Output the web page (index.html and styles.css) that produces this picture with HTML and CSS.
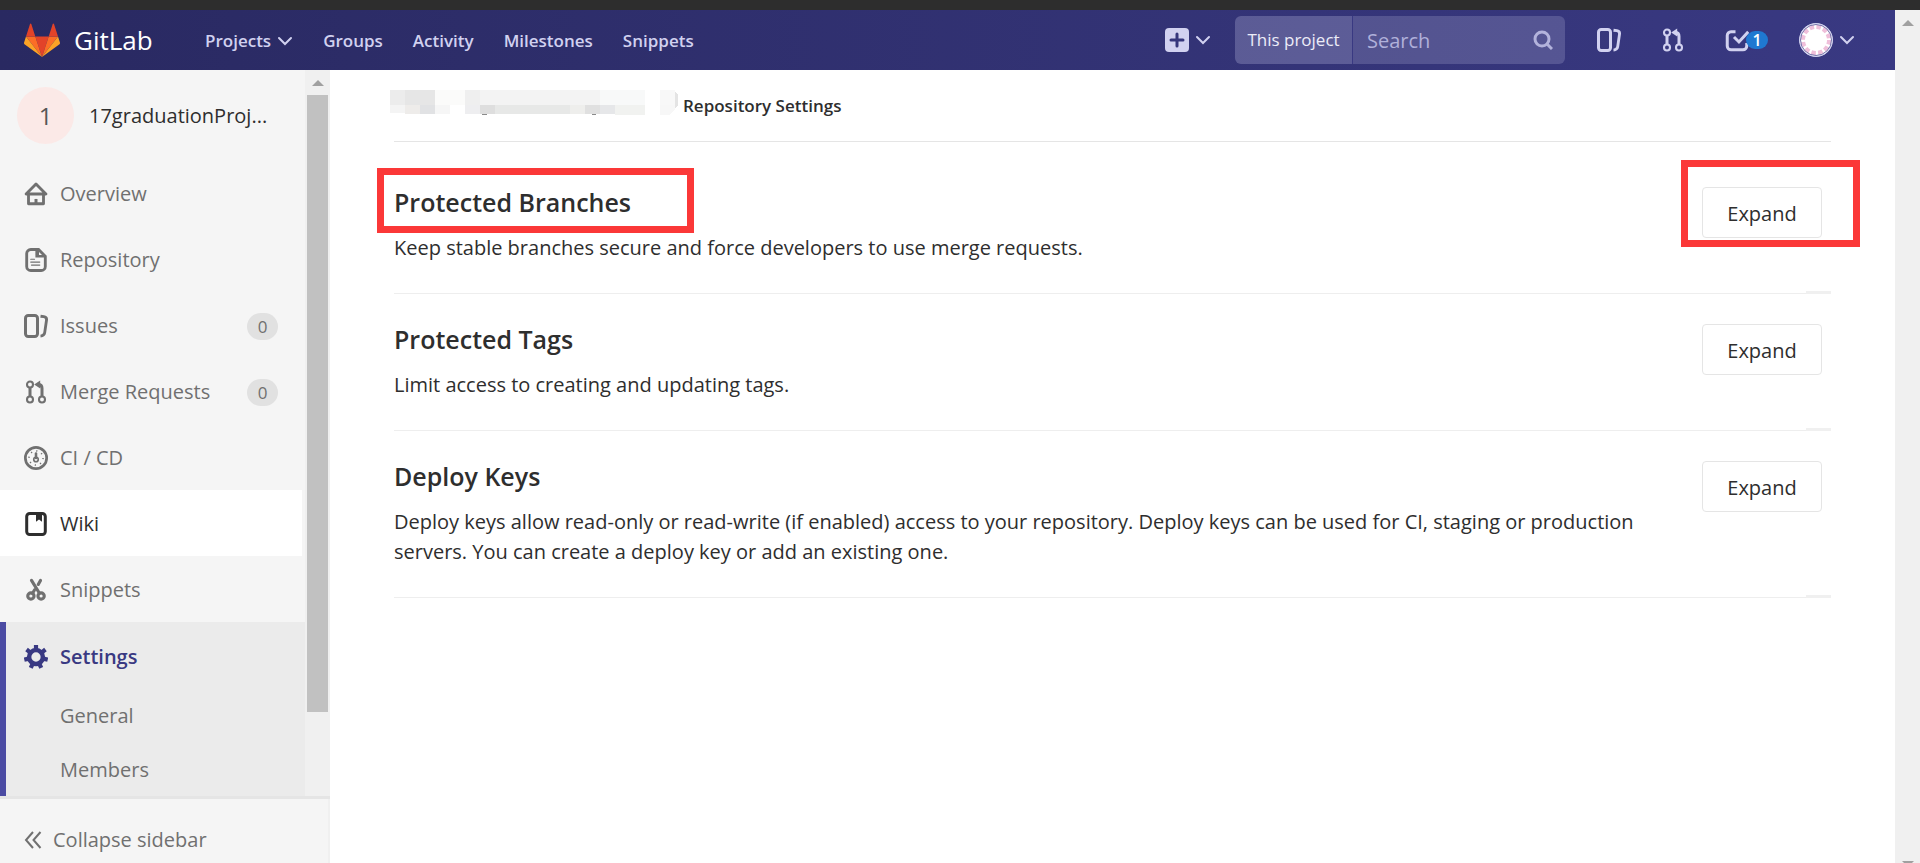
FILE: index.html
```html
<!DOCTYPE html>
<html lang="en">
<head>
    <meta charset="UTF-8">
    <meta name="viewport" content="width=device-width, initial-scale=1.0">
    <title>Repository Settings · GitLab</title>
    <link rel="stylesheet" href="styles.css">
</head>
<body>
    <!-- shared icons -->
    <svg class="sprite" xmlns="http://www.w3.org/2000/svg">
        <symbol id="chevron" viewBox="0 0 16 16"><path d="M2 5l6 6 6-6" fill="none" stroke="currentColor" stroke-width="2" stroke-linecap="round"/></symbol>
        <symbol id="issues" viewBox="0 0 16 16"><rect x="1" y="1" width="8" height="14" rx="1.800" fill="none" stroke="currentColor" stroke-width="2"/><path d="M11 1.500l2.200.3c1.200.2 2 1.200 1.800 2.400l-1.200 8.200c-.2 1.300-1.100 2.200-2.800 2.300" fill="none" stroke="currentColor" stroke-width="1.900"/></symbol>
        <symbol id="merge" viewBox="0 0 16 16"><g fill="none" stroke="currentColor"><g stroke-width="1.400"><circle cx="4" cy="3" r="2"/><circle cx="4" cy="13" r="2"/><circle cx="12" cy="13" r="2"/></g><path d="M4 5v6M12 11V5.500C12 4 11.300 3 9.500 3" stroke-width="2"/></g><path d="M6.800 3l4-2.600v5.200z" fill="currentColor"/></symbol>
    </svg>

    <div class="window-edge"></div>

    <div class="window">
        <div class="app">
            <header class="navbar">
                <a href="#" class="brand">
                    <svg width="36" height="34" viewBox="0 0 36 34">
                        <path d="M18 34L11.300 13.500h13.400z" fill="#e24329"/>
                        <path d="M18 34L11.300 13.500H2z" fill="#fc6d26"/>
                        <path d="M2 13.500L0 19.700c-.2.600 0 1.200.5 1.500L18 34z" fill="#fca326"/>
                        <path d="M2 13.500h9.300L7.300 1c-.2-.7-1.100-.7-1.300 0z" fill="#e24329"/>
                        <path d="M18 34l6.700-20.500H34z" fill="#fc6d26"/>
                        <path d="M34 13.500l2 6.200c.2.600 0 1.200-.5 1.500L18 34z" fill="#fca326"/>
                        <path d="M34 13.500h-9.300l4-12.500c.2-.7 1.100-.7 1.300 0z" fill="#e24329"/>
                    </svg>
                    <span>GitLab</span>
                </a>
                <nav class="nav-links">
                    <a href="#">Projects <svg class="chevron"><use href="#chevron"/></svg></a>
                    <a href="#">Groups</a>
                    <a href="#">Activity</a>
                    <a href="#">Milestones</a>
                    <a href="#">Snippets</a>
                </nav>
                <div class="nav-tools">
                    <button type="button" class="new-menu" aria-label="New">
                        <svg width="24" height="24" viewBox="0 0 24 24"><rect width="24" height="24" rx="4" fill="currentColor"/><path d="M12 6v12M6 12h12" stroke="#36367c" stroke-width="3" stroke-linecap="round"/></svg>
                        <svg class="chevron"><use href="#chevron"/></svg>
                    </button>
                    <form class="search">
                        <label for="search">This project</label>
                        <input type="text" id="search" name="search" placeholder="Search">
                        <button type="submit" aria-label="Search">
                            <svg width="20" height="20" viewBox="0 0 20 20" fill="none" stroke="currentColor" stroke-width="3"><circle cx="9" cy="9" r="7"/><path d="M14 14l5 5"/></svg>
                        </button>
                    </form>
                    <a href="#" class="tool" aria-label="Issues"><svg class="icon"><use href="#issues"/></svg></a>
                    <a href="#" class="tool" aria-label="Merge requests"><svg class="icon"><use href="#merge"/></svg></a>
                    <a href="#" class="tool todos" aria-label="Todos">
                        <svg class="icon" viewBox="0 0 16 16" fill="none" stroke="currentColor" stroke-width="2"><path d="M7 2.500H4A2.500 2.500 0 0 0 1.500 5v7A2.500 2.500 0 0 0 4 14.500h8A2.500 2.500 0 0 0 14.500 12v-2"/><path d="M6 6l3.300 3.300L15.500 2.500"/></svg>
                        <span class="todo-count">1</span>
                    </a>
                    <button type="button" class="user-menu" aria-label="Account">
                        <svg width="34" height="34" viewBox="0 0 34 34">
                            <circle cx="17" cy="17" r="16.500" fill="#fff" stroke="#d1d1f0"/>
                            <circle cx="17" cy="17" r="13" fill="none" stroke="#efbfda" stroke-width="4" stroke-dasharray="4.500 2.307"/>
                            <circle cx="17" cy="17" r="15.500" fill="none" stroke="#4c4c92" stroke-width=".8"/>
                        </svg>
                        <svg class="chevron"><use href="#chevron"/></svg>
                    </button>
                </div>
            </header>

            <div class="page">
                <aside class="sidebar">
                    <div class="sidebar-scroll">
                        <div class="sidebar-content">
                            <a href="#" class="project">
                                <span class="project-avatar">1</span>
                                <span class="project-name">17graduationProj...</span>
                            </a>
                            <ul class="sidebar-menu">
                                <li><a href="#">
                                    <svg class="icon" viewBox="0 0 16 16" fill="none" stroke="currentColor" stroke-width="1.900" stroke-linejoin="round"><path d="M1.400 8L8 1.300 14.600 8zM3 8v6.500h10V8"/><path d="M8 11.300V14" stroke-width="2"/></svg>
                                    Overview</a></li>
                                <li><a href="#">
                                    <svg class="icon" viewBox="0 0 16 16" fill="none" stroke="currentColor"><path d="M9.500 1H4.500A2.700 2.700 0 0 0 1.800 3.700v8.600A2.700 2.700 0 0 0 4.500 15h7a2.700 2.700 0 0 0 2.700-2.700V5.500L9.700 1z" stroke-width="1.900"/><path d="M7.600.8V6.400H14V4.500L10.500 1z" fill="currentColor" stroke="none"/><path d="M10 2.600v2h2z" fill="#f5f5f5" stroke="none"/><path d="M4.500 7.500H7M4.500 9.400h6M5 11.400h5.500" stroke-width=".8" stroke-linecap="round"/></svg>
                                    Repository</a></li>
                                <li><a href="#"><svg class="icon"><use href="#issues"/></svg> Issues <span class="badge">0</span></a></li>
                                <li><a href="#"><svg class="icon"><use href="#merge"/></svg> Merge Requests <span class="badge">0</span></a></li>
                                <li><a href="#">
                                    <svg class="icon" viewBox="0 0 16 16" fill="none" stroke="currentColor"><circle cx="8" cy="8" r="7.100" stroke-width="1.800"/><circle cx="8" cy="8" r="4.700" stroke-width="1" stroke-dasharray=".8 2.891"/><circle cx="8" cy="9" r="1.500" stroke-width="1.100"/><path d="M8 5v3" stroke-width="1.700" stroke-linecap="round"/></svg>
                                    CI / CD</a></li>
                                <li class="current"><a href="#">
                                    <svg class="icon" viewBox="0 0 16 16" fill="none" stroke="currentColor"><rect x="1.800" y="1" width="12.400" height="14" rx="2" stroke-width="2"/><path d="M8 1.500h4v5L10 5 8 6.500z" fill="currentColor" stroke="none"/></svg>
                                    Wiki</a></li>
                                <li><a href="#">
                                    <svg class="icon" viewBox="0 0 16 16" fill="none" stroke="currentColor"><circle cx="4.600" cy="12" r="2.100" stroke-width="2.100"/><circle cx="11.400" cy="12" r="2.100" stroke-width="2.100"/><path d="M5 1.600L10.200 10M11 1.600L9.500 4.300M7 8l-1.300 2.200" stroke-width="2.100" stroke-linecap="round"/></svg>
                                    Snippets</a></li>
                            </ul>
                            <div class="active-group">
                                <a href="#" class="active-title">
                                    <svg class="icon" viewBox="0 0 16 16" fill="none" stroke="currentColor"><circle cx="8" cy="8" r="4.600" stroke-width="3"/><path d="M8 0v3M1.700 3l2.400 1.900M.2 9.800l3-.7M4.500 15.200l1.300-2.700M11.500 15.200l-1.300-2.700M15.800 9.800l-3-.7M14.300 3l-2.400 1.900" stroke-width="2.800"/></svg>
                                    Settings</a>
                                <a href="#">General</a>
                                <a href="#">Members</a>
                            </div>
                        </div>
                        <div class="scrollbar">
                            <span class="arrow-up"></span>
                            <span class="thumb"></span>
                        </div>
                    </div>
                    <button type="button" class="collapse">
                        <svg width="18" height="18" viewBox="0 0 18 18" fill="none" stroke="currentColor" stroke-width="2"><path d="M9 1L2 9l7 8M16.500 1l-7 8 7 8"/></svg>
                        Collapse sidebar
                    </button>
                </aside>

                <main class="content">
                    <div class="breadcrumbs">
                        <svg class="redacted" width="290" height="26" viewBox="0 0 290 26" shape-rendering="crispEdges">
                            <path d="M0 0h15v15H0z" fill="#ececec"/>
                            <path d="M15 0h30v15H15z" fill="#e6e6e6"/>
                            <path d="M45 0h30v15H45z" fill="#fbfbfa"/>
                            <path d="M75 0h15v15H75z" fill="#efefef"/>
                            <path d="M90 0h120v15H90z" fill="#f3f3f3"/>
                            <path d="M210 0h45v15h-45z" fill="#f8f9f9"/>
                            <path d="M270 0h15v15h-15z" fill="#f8f8f8"/>
                            <path d="M0 15h15v8H0z" fill="#f4f4f4"/>
                            <path d="M15 15h15v9H15z" fill="#eeecea"/>
                            <path d="M30 15h15v9H30z" fill="#e1e2e4"/>
                            <path d="M45 15h15v9H45z" fill="#f6f6f6"/>
                            <path d="M75 15h15v9H75z" fill="#eeeef0"/>
                            <path d="M90 15h15v9H90z" fill="#dedede"/>
                            <path d="M105 15h75v9h-75z" fill="#e7e8e7"/>
                            <path d="M180 15h15v9h-15z" fill="#eeeeec"/>
                            <path d="M195 15h15v9h-15z" fill="#e0e0e0"/>
                            <path d="M210 15h15v9h-15z" fill="#e6e7e9"/>
                            <path d="M225 15h30v10h-30z" fill="#f1f2f0"/>
                            <path d="M270 15h15v5l-6 5h-9z" fill="#f7f7f7"/>
                            <path d="M285 1l3 4v10l-3 4z" fill="#e4e4e4"/>
                            <path d="M92 24h5v1h-5zM202 24h4v1h-4z" fill="#8a8a8a"/>
                        </svg>
                        <strong>Repository Settings</strong>
                    </div>

                    <section class="settings">
                        <div class="settings-text">
                            <h4><span class="marked">Protected Branches</span></h4>
                            <p>Keep stable branches secure and force developers to use merge requests.</p>
                        </div>
                        <div class="settings-action marked-action"><button type="button" class="btn">Expand</button></div>
                    </section>
                    <section class="settings">
                        <div class="settings-text">
                            <h4>Protected Tags</h4>
                            <p>Limit access to creating and updating tags.</p>
                        </div>
                        <div class="settings-action"><button type="button" class="btn">Expand</button></div>
                    </section>
                    <section class="settings">
                        <div class="settings-text">
                            <h4>Deploy Keys</h4>
                            <p>Deploy keys allow read-only or read-write (if enabled) access to your repository. Deploy keys can be used for CI, staging or production servers. You can create a deploy key or add an existing one.</p>
                        </div>
                        <div class="settings-action"><button type="button" class="btn">Expand</button></div>
                    </section>
                </main>
            </div>
        </div>
        <div class="scrollbar">
            <span class="arrow-up"></span>
            <span class="arrow-down"></span>
        </div>
    </div>
</body>
</html>
```
FILE: styles.css
```css
*, *::before, *::after {
    box-sizing: border-box;
}
body {
    margin: 0;
    height: 100vh;
    display: flex;
    flex-direction: column;
    overflow: hidden;
    font-family: "Segoe UI", "Open Sans", "Noto Sans", sans-serif;
    font-size: 20px;
    line-height: 30px;
    color: #2e2e2e;
    background-color: #fff;
}
a {
    color: inherit;
    text-decoration: none;
}
button, input {
    font: inherit;
    color: inherit;
    background: none;
    border: 0;
    padding: 0;
}
.sprite {
    position: absolute;
    width: 0;
    height: 0;
}
.icon {
    width: 24px;
    height: 24px;
    flex: none;
}
.chevron {
    width: 16px;
    height: 16px;
    flex: none;
}

/* window frame */
.window-edge {
    height: 10px;
    flex: none;
    background-color: #2d2d2d;
}
.window {
    flex: 1;
    display: flex;
    min-height: 0;
}
.app {
    flex: 1;
    display: flex;
    flex-direction: column;
    min-width: 0;
}
.scrollbar {
    width: 25px;
    flex: none;
    display: flex;
    flex-direction: column;
    align-items: center;
    padding-top: 10px;
    background-color: #f0f0f0;
}
.arrow-up {
    border: 6px solid transparent;
    border-top: 0;
    border-bottom-color: #a0a0a0;
}
.arrow-down {
    margin: auto 0 -4px;
    border: 6px solid transparent;
    border-bottom: 0;
    border-top-color: #a0a0a0;
}
.thumb {
    width: 21px;
    height: 617px;
    margin-top: 9px;
    background-color: #c1c1c1;
}

/* navbar */
.navbar {
    height: 60px;
    flex: none;
    display: flex;
    align-items: center;
    padding: 0 40px 0 24px;
    color: #d1d1f0;
    background: linear-gradient(to right, #292961, #393982);
}
.brand {
    display: flex;
    align-items: center;
    gap: 14px;
    width: 181px;
    font-size: 26px;
    color: #fff;
}
.nav-links {
    display: flex;
    gap: 30px;
    padding-top: 2px;
    font-size: 17px;
    font-weight: 600;
}
.nav-links a {
    display: flex;
    align-items: center;
    gap: 6px;
}
.nav-tools {
    display: flex;
    align-items: center;
    margin-left: auto;
}
.new-menu, .user-menu {
    display: flex;
    align-items: center;
    gap: 6px;
}
.search {
    display: flex;
    align-items: center;
    width: 330px;
    height: 48px;
    margin: 0 12px 0 24px;
    border-radius: 6px;
    overflow: hidden;
    background-color: rgba(209, 209, 240, 0.2);
}
.search label {
    width: 118px;
    flex: none;
    text-align: center;
    font-size: 17px;
    line-height: 50px;
    color: #ececf8;
    border-right: 1px solid #393982;
    background-color: rgba(209, 209, 240, 0.08);
}
.search input {
    flex: 1;
    min-width: 0;
    padding: 2px 0 0 14px;
}
.search input::placeholder {
    color: #b0b0da;
    opacity: 1;
}
.search button {
    height: 20px;
    margin-right: 12px;
    color: #b3b3dc;
}
.search svg {
    display: block;
}
.tool {
    display: flex;
    padding: 0 20px;
}
.todos {
    position: relative;
    margin-right: 30px;
}
.todo-count {
    position: absolute;
    left: 41px;
    top: 3px;
    width: 22px;
    height: 18px;
    border-radius: 9px;
    text-align: center;
    font-size: 16px;
    font-weight: 600;
    line-height: 18px;
    color: #fff;
    background-color: #1f78d1;
}

/* sidebar */
.page {
    flex: 1;
    display: flex;
    min-height: 0;
}
.sidebar {
    width: 330px;
    flex: none;
    display: flex;
    flex-direction: column;
    color: #707070;
    background-color: #f5f5f5;
    box-shadow: inset -2px 0 #f0f0f0;
}
.sidebar-scroll {
    flex: 1;
    display: flex;
    min-height: 0;
    overflow: hidden;
    border-bottom: 3px solid #e5e5e5;
}
.sidebar-content {
    flex: 1;
    display: flex;
    flex-direction: column;
}
.project {
    display: flex;
    align-items: center;
    gap: 15px;
    height: 90px;
    flex: none;
    padding-left: 17px;
    font-weight: 500;
    color: #2e2e2e;
}
.project-avatar {
    width: 57px;
    height: 57px;
    border-radius: 50%;
    text-align: center;
    font-size: 24px;
    line-height: 57px;
    color: #555;
    background-color: #fbe9e7;
}
.project-name {
    padding-top: 2px;
}
.sidebar-menu {
    margin: 0;
    padding: 0;
    list-style: none;
}
.sidebar-menu a, .active-title {
    display: flex;
    align-items: center;
    gap: 12px;
    height: 66px;
    padding: 2px 24px 0;
}
.sidebar-menu .current {
    margin-right: 3px;
    color: #2e2e2e;
    background-color: #fff;
}
.badge {
    width: 31px;
    height: 27px;
    margin: 0 3px 0 auto;
    border-radius: 14px;
    text-align: center;
    font-size: 17px;
    line-height: 27px;
    background-color: #e1e1e1;
}
.active-group {
    flex: 1;
    border-left: 6px solid #4b4ba3;
    background-color: #ebebeb;
}
.active-group a {
    display: flex;
    align-items: center;
    height: 54px;
    padding-left: 54px;
}
.active-group .active-title {
    height: 67px;
    padding-left: 18px;
    font-weight: 600;
    color: #393982;
}
.collapse {
    display: flex;
    align-items: center;
    gap: 11px;
    height: 64px;
    padding: 18px 0 0 24px;
}

/* settings page */
.content {
    flex: 1;
    min-width: 0;
    padding: 0 64px;
}
.breadcrumbs {
    display: flex;
    align-items: center;
    height: 72px;
    margin-bottom: 15px;
    border-bottom: 1px solid #e5e5e5;
    font-size: 17px;
}
.breadcrumbs strong {
    font-weight: 600;
}
.redacted {
    flex: none;
    margin: 0 3px 6px -4px;
}
.settings {
    position: relative;
    display: flex;
    justify-content: space-between;
    padding: 30px 9px 30px 0;
    border-bottom: 1px solid #eee;
}
.settings::after {
    content: "";
    position: absolute;
    right: 0;
    bottom: -1px;
    width: 25px;
    height: 3px;
    background-color: #f0f0f0;
}
.settings-text {
    max-width: 1260px;
}
.settings h4 {
    margin: 0 0 16px;
    font-size: 25px;
    font-weight: 600;
    line-height: 30px;
}
.settings p {
    margin: 0;
}
.settings-action {
    position: relative;
    height: 46px;
}
.btn {
    width: 120px;
    height: 51px;
    padding-top: 3px;
    border: 1px solid #e5e5e5;
    border-radius: 4px;
    background-color: #fff;
}

/* red marker frames */
.marked {
    position: relative;
}
.marked::after, .marked-action::after {
    content: "";
    position: absolute;
    border: 7px solid #fb3838;
    pointer-events: none;
}
.marked::after {
    left: -17px;
    top: -17px;
    width: 317px;
    height: 65px;
}
.marked-action::after {
    left: -21px;
    top: -27px;
    width: 179px;
    height: 87px;
}
```
